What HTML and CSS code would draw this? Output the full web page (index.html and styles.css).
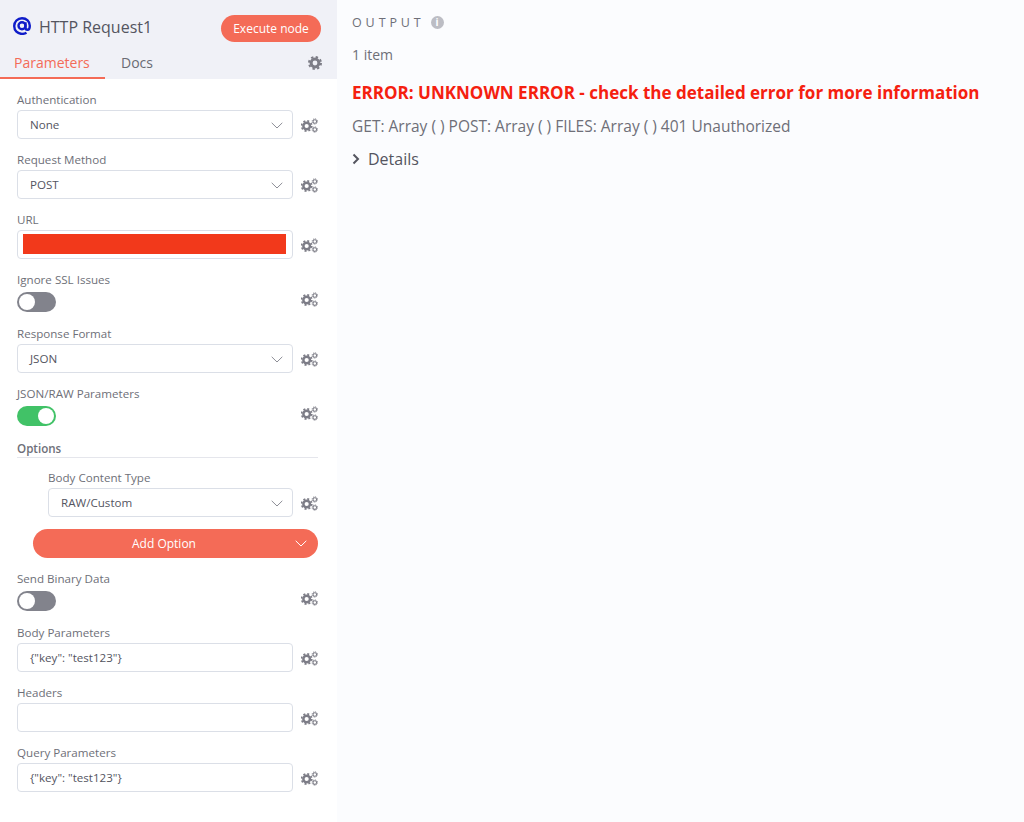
FILE: index.html
```html
<!DOCTYPE html>
<html lang="en">
<head>
<meta charset="utf-8">
<title>HTTP Request1</title>
<link rel="stylesheet" href="styles.css">
</head>
<body>
<svg class="defs" width="0" height="0" aria-hidden="true">
  <symbol id="cogs" viewBox="0 0 18 15">
    <g fill="none" stroke="#7d7d87">
      <circle cx="6" cy="8" r="3.5" stroke-width="2.6"/>
      <circle cx="6" cy="8" r="5.4" stroke-width="1.8" stroke-dasharray="2.1 2.14"/>
      <circle cx="14.6" cy="3.2" r="1.9" stroke-width="1.1"/>
      <circle cx="14.6" cy="3.2" r="2.8" stroke-width="1" stroke-dasharray="1.2 1.0"/>
      <circle cx="14.6" cy="11.8" r="1.9" stroke-width="1.1"/>
      <circle cx="14.6" cy="11.8" r="2.8" stroke-width="1" stroke-dasharray="1.2 1.0"/>
    </g>
  </symbol>
  <symbol id="chev" viewBox="0 0 12 7">
    <path d="M.7.8 6 6l5.3-5.2" fill="none" stroke="currentColor" stroke-width="1"/>
  </symbol>
</svg>
<div class="app">
  <aside class="side">
    <header class="head">
      <div class="title-row">
        <svg class="at" viewBox="0 0 18 18" aria-label="at">
          <g fill="none" stroke="#0f1cc9" stroke-width="2.4">
            <circle cx="9" cy="8.800" r="3.500"/>
            <path d="M12.500 5.200v5.300c0 1.500.9 2.300 2 2.300 1.500 0 2.300-1.700 2.300-4 0-4.400-3.300-7.500-7.800-7.500-4.500 0-7.800 3.300-7.800 7.800 0 4.600 3.300 7.800 7.800 7.800 1.700 0 3.200-.4 4.500-1.200"/>
          </g>
        </svg>
        <h1 class="title">HTTP Request1</h1>
        <button class="exec">Execute node</button>
      </div>
      <nav class="tabs">
        <span class="tab active">Parameters</span>
        <span class="tab">Docs</span>
        <svg class="gear" viewBox="0 0 14 14">
          <g fill="none" stroke="#7d7d87">
            <circle cx="7" cy="7" r="3.9" stroke-width="3"/>
            <circle cx="7" cy="7" r="6" stroke-width="2" stroke-dasharray="2.36 2.35"/>
          </g>
        </svg>
      </nav>
    </header>
    <div class="params">
      <div class="field">
        <label class="label">Authentication</label>
        <div class="line"><div class="input select">None<svg class="chev"><use href="#chev"/></svg></div><svg class="cogs"><use href="#cogs"/></svg></div>
      </div>
      <div class="field">
        <label class="label">Request Method</label>
        <div class="line"><div class="input select">POST<svg class="chev"><use href="#chev"/></svg></div><svg class="cogs"><use href="#cogs"/></svg></div>
      </div>
      <div class="field">
        <label class="label">URL</label>
        <div class="line"><div class="input url"><div class="redact"></div></div><svg class="cogs"><use href="#cogs"/></svg></div>
      </div>
      <div class="field toggle-field">
        <label class="label">Ignore SSL Issues</label>
        <div class="line toggle-line"><div class="grow"><span class="switch"></span></div><svg class="cogs"><use href="#cogs"/></svg></div>
      </div>
      <div class="field">
        <label class="label">Response Format</label>
        <div class="line"><div class="input select">JSON<svg class="chev"><use href="#chev"/></svg></div><svg class="cogs"><use href="#cogs"/></svg></div>
      </div>
      <div class="field toggle-field">
        <label class="label">JSON/RAW Parameters</label>
        <div class="line toggle-line"><div class="grow"><span class="switch on"></span></div><svg class="cogs"><use href="#cogs"/></svg></div>
      </div>
      <div class="options-head">Options</div>
      <div class="field nested">
        <label class="label">Body Content Type</label>
        <div class="line"><div class="input select">RAW/Custom<svg class="chev"><use href="#chev"/></svg></div><svg class="cogs"><use href="#cogs"/></svg></div>
      </div>
      <button class="add">Add Option<svg class="chev add-chev"><use href="#chev"/></svg></button>
      <div class="field toggle-field">
        <label class="label">Send Binary Data</label>
        <div class="line toggle-line"><div class="grow"><span class="switch"></span></div><svg class="cogs"><use href="#cogs"/></svg></div>
      </div>
      <div class="field">
        <label class="label">Body Parameters</label>
        <div class="line"><div class="input">{"key": "test123"}</div><svg class="cogs"><use href="#cogs"/></svg></div>
      </div>
      <div class="field">
        <label class="label">Headers</label>
        <div class="line"><div class="input"></div><svg class="cogs"><use href="#cogs"/></svg></div>
      </div>
      <div class="field">
        <label class="label">Query Parameters</label>
        <div class="line"><div class="input">{"key": "test123"}</div><svg class="cogs"><use href="#cogs"/></svg></div>
      </div>
    </div>
  </aside>
  <main class="output">
    <div class="out-title">OUTPUT<span class="info">i</span></div>
    <div class="count">1 item</div>
    <div class="error">ERROR: UNKNOWN ERROR - check the detailed error for more information</div>
    <div class="message">GET: Array ( ) POST: Array ( ) FILES: Array ( ) 401 Unauthorized</div>
    <div class="details">
      <svg class="caret" viewBox="0 0 8 12"><path d="M1.5 1.5 6 6l-4.500 4.500" fill="none" stroke="#54555f" stroke-width="2"/></svg>
      Details
    </div>
  </main>
</div>
</body>
</html>
```
FILE: styles.css
```css
* { box-sizing: border-box; }
html, body { margin: 0; height: 100%; }
body { font-family: "Open Sans", "Liberation Sans", sans-serif; color: #54555f; background: #fbfcfe; overflow: hidden; }
.defs { position: absolute; }
.app { display: flex; height: 822px; }

.side { width: 337px; height: 822px; background: #fff; flex: none; }
.head { height: 79px; background: #f0f1f7; padding-top: 14px; }
.title-row { display: flex; align-items: center; height: 29px; padding: 0 16px 0 13px; }
.at { width: 18px; height: 18px; flex: none; margin: -5px 8px 0 0; }
.title { margin: -3px 0 0; font-size: 16px; font-weight: 400; color: #54555f; flex: 1; white-space: nowrap; }
.exec { width: 100px; height: 27px; border: 0; border-radius: 14px; background: #f46b57; color: #fff; font: 500 12px "Open Sans", sans-serif; padding: 0; }
.tabs { display: flex; align-items: stretch; height: 36px; position: relative; }
.tab { font-size: 14px; line-height: 20px; padding: 10px 16px 0 16px; color: #6a6b74; }
.tab.active { color: #f46b57; border-bottom: 2px solid #f46b57; width: 105px; padding-left: 14px; }
.gear { width: 14px; height: 14px; margin: 13px 15px 0 auto; }

.params { padding: 12px 19px 0 17px; }
.field { height: 60px; }
.toggle-field { height: 54px; }
.label { display: block; font-size: 11.6px; line-height: 18px; height: 18px; color: #6e6f78; }
.line { display: flex; align-items: center; height: 30px; }
.toggle-line { align-items: flex-start; height: 24px; margin-top: 1px; }
.toggle-line .cogs { margin-top: 1.5px; }
.grow { flex: 1; }
.input { flex: 1; height: 29px; border: 1px solid #dbdfe7; border-radius: 4px; background: #fff; font-size: 11.6px; line-height: 28px; padding-left: 12px; color: #54555f; position: relative; }
.select .chev { position: absolute; right: 9px; top: 11px; width: 12px; height: 7px; color: #8d8e96; }
.url { padding: 3.5px 6px 3.5px 5px; }
.redact { height: 20px; background: #f2391b; }
.cogs { width: 17px; height: 15px; margin: 2px 0 0 8px; flex: none; }

.switch { display: block; width: 39px; height: 20px; border-radius: 10px; background: #82838c; position: relative; margin-top: 2px; }
.switch::after { content: ""; position: absolute; left: 2px; top: 2px; width: 16px; height: 16px; border-radius: 50%; background: #fff; }
.switch.on { background: #41c267; }
.switch.on::after { left: 21px; }

.options-head { font-size: 11.6px; font-weight: 600; line-height: 18px; height: 18px; margin-top: 1px; border-bottom: 1px solid #e5e6ec; color: #6e6f78; margin-bottom: 11px; }
.nested { padding-left: 31px; height: 60px; }
.add { display: block; position: relative; width: 285px; height: 29px; margin: 0 0 12px 16px; border: 0; border-radius: 15px; background: #f46b57; color: #fff; font: 500 12px "Open Sans", sans-serif; padding: 0 23px 0 0; }
.add-chev { position: absolute; right: 11px; top: 11px; width: 12px; height: 7px; color: #fff; }

.output { flex: 1; padding: 14px 15px; }
.out-title { display: flex; align-items: center; font-size: 12.5px; line-height: 17px; letter-spacing: 3.9px; color: #6e6f78; height: 17px; }
.info { width: 13px; height: 13px; margin-left: 6px; border-radius: 50%; background: #bcbdc4; color: #fff; font-size: 10px; font-weight: 700; line-height: 13px; text-align: center; letter-spacing: 0; }
.count { margin-top: 14px; font-size: 14px; line-height: 20px; color: #6e6f78; }
.error { margin-top: 15px; font-size: 17.03px; line-height: 25px; font-weight: 700; color: #f5200f; white-space: nowrap; }
.message { margin-top: 10px; font-size: 15.5px; line-height: 22px; color: #6e6f78; white-space: nowrap; }
.details { margin-top: 11px; display: flex; align-items: center; font-size: 16px; line-height: 22px; color: #54555f; }
.caret { width: 8px; height: 12px; margin-right: 8px; }
```
